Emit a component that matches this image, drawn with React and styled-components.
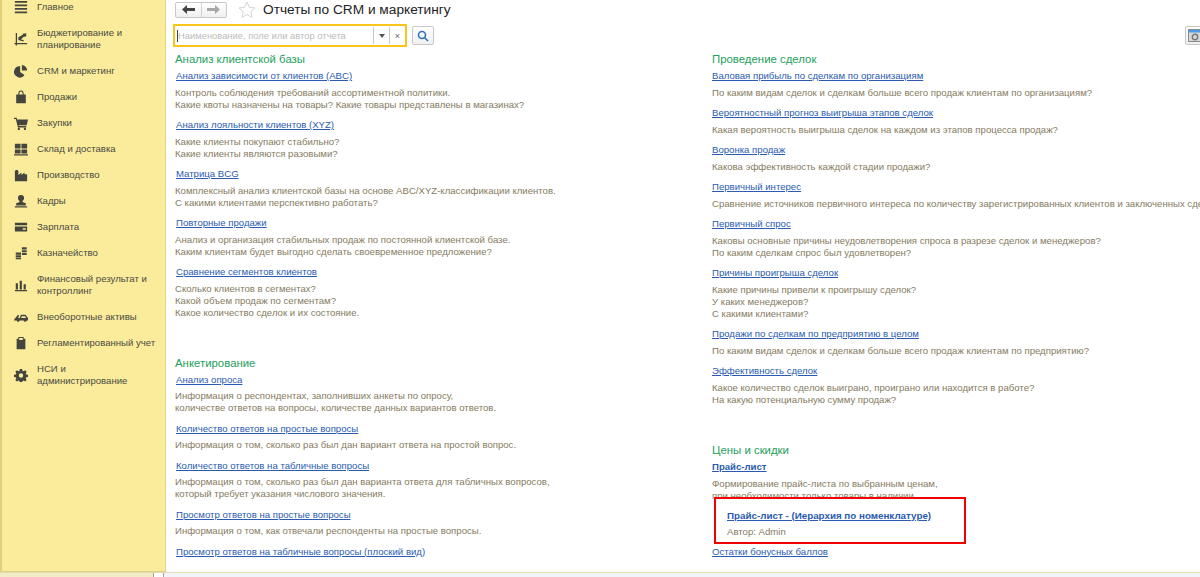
import React from 'react';
import styled, { createGlobalStyle } from 'styled-components';

const GlobalStyle = createGlobalStyle`
  html, body {
    margin: 0;
    padding: 0;
    background: #fff;
    overflow: hidden;
  }
`;

const Page = styled.div`
  width: 1200px;
  height: 577px;
  display: flex;
  flex-direction: column;
  overflow: hidden;
  font-family: 'Liberation Sans', Arial, sans-serif;
`;

const Workspace = styled.div`
  flex: 1;
  min-height: 0;
  display: flex;
`;

const BottomStrip = styled.div`
  height: 4px;
  background: #f1f5f8;
  border-top: 1px solid #e4dcb4;
  display: flex;
`;

const StripCell = styled.div`
  width: ${props => props.$width}px;
  flex-shrink: 0;
  background: ${props => props.$fill};
  border-right: 1px solid #a8a48c;
`;

const Sidebar = styled.nav`
  width: 166px;
  flex-shrink: 0;
  box-sizing: border-box;
  background: #fbec9c;
  border-left: 2px solid #dfd07f;
  border-right: 1px solid #e3d58a;
  border-bottom: 1px solid #dfd07f;
  overflow: hidden;
`;

const NavList = styled.ul`
  list-style: none;
  margin: -6px 0 0;
  padding: 0;
`;

const NavItem = styled.li`
  display: flex;
  align-items: center;
  padding: 7px 0 7px 12px;
  gap: 9px;
  color: #4a4a40;
  font-size: 9.6px;
  line-height: 12px;
`;

const NavIcon = styled.svg`
  width: 14px;
  height: 14px;
  margin: -1px 0;
  flex-shrink: 0;
  fill: #45453f;
`;

const NavLabel = styled.span`
  flex: 1;
  min-width: 0;
  white-space: pre-line;
`;

const Main = styled.main`
  flex: 1;
  min-width: 0;
  display: flex;
  flex-direction: column;
  padding-left: 7px;
  overflow: hidden;
`;

const TitleRow = styled.div`
  display: flex;
  align-items: center;
  height: 17px;
  padding-left: 2px;
  margin-top: 1px;
`;

const NavButtons = styled.div`
  width: 50px;
  height: 14px;
  display: flex;
  border: 1px solid #c8c8c8;
  border-radius: 2px;
  background: linear-gradient(#fff, #f0f0f0);
`;

const NavButton = styled.div`
  flex: 1;
  display: flex;
  align-items: center;
  justify-content: center;
  & + & {
    border-left: 1px solid #d4d4d4;
  }
`;

const Star = styled.svg`
  width: 18px;
  height: 18px;
  margin-left: 11px;
  fill: #fff;
  stroke: #d4d4d4;
  stroke-width: 1;
`;

const Title = styled.h1`
  margin: 0 0 0 7px;
  font-size: 13.7px;
  font-weight: 400;
  line-height: 17px;
  color: #222;
  white-space: nowrap;
`;

const SearchRow = styled.div`
  display: flex;
  align-items: center;
  height: 23px;
  margin-top: 6px;
`;

const SearchField = styled.div`
  width: 234px;
  height: 23px;
  box-sizing: border-box;
  border: 2px solid #fbc61c;
  display: flex;
  align-items: center;
  padding-left: 2px;
`;

const Caret = styled.div`
  width: 1px;
  height: 12px;
  background: #444;
`;

const Placeholder = styled.span`
  flex: 1;
  font-size: 9.4px;
  color: #bcbcbc;
  white-space: nowrap;
  overflow: hidden;
`;

const FieldAction = styled.div`
  width: 15px;
  height: 17px;
  flex-shrink: 0;
  display: flex;
  align-items: center;
  justify-content: center;
  border-left: 1px solid #c8c8c8;
  color: #666;
  font-size: 9px;
`;

const ToolButton = styled.div`
  width: 20px;
  height: 17px;
  margin-left: 5px;
  border: 1px solid #c8c8c8;
  border-radius: 2px;
  background: linear-gradient(#fff, #f0f0f0);
  display: flex;
  align-items: center;
  justify-content: center;
  flex-shrink: 0;
`;

const SettingsButton = styled(ToolButton)`
  margin-left: auto;
  margin-right: -11px;
  width: 22px;
  justify-content: flex-start;
  padding-left: 2px;
`;

const Columns = styled.div`
  display: grid;
  grid-template-columns: 537px 500px;
  margin-top: 5px;
  padding-left: 2px;
`;

const Column = styled.div`
  min-width: 0;
`;

const GroupTitle = styled.h2`
  margin: ${props => props.$gap || 0}px 0 3px;
  font-size: 11.4px;
  line-height: 14px;
  font-weight: 400;
  color: #1ea05c;
`;

const Entry = styled.div`
  margin-bottom: 7.5px;
`;

const ReportLink = styled.a`
  display: block;
  margin-bottom: 4.5px;
  padding-left: ${props => (props.$indent ? 1 : 0)}px;
  font-size: 9.6px;
  line-height: 13px;
  color: #2a5bb0;
  text-decoration: underline;
  font-weight: ${props => (props.$bold ? 700 : 400)};
  white-space: nowrap;
`;

const BoxLink = styled(ReportLink)`
  font-size: 9.8px;
`;

const Description = styled.p`
  margin: 0;
  font-size: 9.6px;
  line-height: 12px;
  color: #867b62;
  white-space: nowrap;
`;

const HighlightBox = styled.div`
  position: relative;
  width: 252px;
  height: 47px;
  box-sizing: border-box;
  margin: -12px 0 0.5px 2px;
  padding: 9.5px 0 0 11px;
  background: #fff;
  border: 2px solid #f00000;
`;

const navItems = [
  { label: 'Главное', icon: <path d="M1 1h14v2H1zM1 5h14v2H1zM1 9h14v2H1zM1 13h14v2H1z" /> },
  {
    label: 'Бюджетирование и планирование',
    icon: <path d="M2 1h1.500v11.500H15V14H3.500v1.500H2V14H.5v-1.500H2zM5 6l5-3v-1l4-.5V5l-3 .5L8 8.500l3 .5v1.500H9.500L5 9z" />,
  },
  { label: 'CRM и маркетинг', icon: <path d="M7 2.500V9l5 3.500A6.500 6.500 0 1 1 7 2.500zM9 1a6.500 6.500 0 0 1 6 6.500H9z" /> },
  { label: 'Продажи', icon: <path fillRule="evenodd" d="M2.500 5H5V3.500a3 3 0 0 1 6 0V5h2.500v10h-11zM6.200 5h3.600V3.500a1.800 1.800 0 0 0-3.600 0z" /> },
  { label: 'Закупки', icon: <path d="M0 2h3l.6 2H16l-1.500 6.500H5.300l.3 1H14v1.500H4.500L2 3.500H0zM5.500 13.500a1.300 1.300 0 1 1 0 2.600 1.300 1.300 0 0 1 0-2.600zM12.500 13.500a1.300 1.300 0 1 1 0 2.600 1.300 1.300 0 0 1 0-2.600z" /> },
  { label: 'Склад и доставка', icon: <path d="M1 2h6.500v5.500H1zM8.500 2H15v5.500H8.500zM1 8.500h6.500V13H1zM8.500 8.500H15V13H8.500zM0 14h16v1.500H0z" /> },
  { label: 'Производство', icon: <path d="M1 15V3l2-1 2 1v5l3.500-3v3l3.500-3v2h3v8z" /> },
  { label: 'Кадры', icon: <path d="M8 1a3.500 3.500 0 0 1 3.500 3.500c0 1.500-.8 3-1.800 3.500v1l3.800 1.500V13h-11v-2.500L6.300 9V8C5.300 7.500 4.500 6 4.500 4.500A3.500 3.500 0 0 1 8 1zM1 14h14v1.500H1z" /> },
  { label: 'Зарплата', icon: <path fillRule="evenodd" d="M1 3h14v3H1zM1 7.500h14V13H1zM10 9.500h3.500v1.500H10z" /> },
  { label: 'Казначейство', icon: <path d="M9 1.500h5.500V4H9zM9 4.800h5.500v2.400H9zM9 8h5.500v2.400H9zM2 7.500h6v2.400H2zM2 10.500h6v2H2zM2 13h6v2H2z" /> },
  { label: 'Финансовый результат и контроллинг', icon: <path d="M2 6h2.500v7H2zM6.500 3h2.500v10H6.500zM11 7h2.500v6H11zM1 13.800h14V15H1z" /> },
  { label: 'Внеоборотные активы', icon: <path fillRule="evenodd" d="M0 11l4.500-5.500 1.500 1L4.500 9h2L8 5.500h5L16 9v3h-1.500a1.800 1.800 0 0 1-3.500 0H6.500a1.800 1.800 0 0 1-3.500 0H0zM9 7l-1 2h6l-1.500-2z" /> },
  { label: 'Регламентированный учет', icon: <path fillRule="evenodd" d="M3 3h2V1h6v2h2v12H3zM6 2.200v2.300h4V2.200z" /> },
  { label: 'НСИ и\nадминистрирование', icon: <path fillRule="evenodd" d="M6.700 1h2.600l.4 2 1.300.6 1.700-1.100 1.800 1.800-1.100 1.700.6 1.300 2 .4v2.600l-2 .4-.6 1.300 1.100 1.700-1.800 1.800-1.700-1.100-1.300.6-.4 2H6.700l-.4-2-1.300-.6-1.700 1.100-1.800-1.800 1.100-1.700-.6-1.300-2-.4V7.700l2-.4.6-1.300-1.100-1.700 1.800-1.800L5 3.600 6.300 3zM8 6a2.500 2.500 0 1 0 0 5 2.500 2.500 0 0 0 0-5z" /> },
];

const leftGroups = [
  {
    title: 'Анализ клиентской базы',
    entries: [
      { link: 'Анализ зависимости от клиентов (ABC)', text: ['Контроль соблюдения требований ассортиментной политики.', 'Какие квоты назначены на товары? Какие товары представлены в магазинах?'] },
      { link: 'Анализ лояльности клиентов (XYZ)', text: ['Какие клиенты покупают стабильно?', 'Какие клиенты являются разовыми?'] },
      { link: 'Матрица BCG', text: ['Комплексный анализ клиентской базы на основе ABC/XYZ-классификации клиентов.', 'С какими клиентами перспективно работать?'] },
      { link: 'Повторные продажи', text: ['Анализ и организация стабильных продаж по постоянной клиентской базе.', 'Каким клиентам будет выгодно сделать своевременное предложение?'] },
      { link: 'Сравнение сегментов клиентов', text: ['Сколько клиентов в сегментах?', 'Какой объем продаж по сегментам?', 'Какое количество сделок и их состояние.'] },
    ],
  },
  {
    title: 'Анкетирование',
    gap: 37,
    entries: [
      { link: 'Анализ опроса', text: ['Информация о респондентах, заполнивших анкеты по опросу,', 'количестве ответов на вопросы, количестве данных вариантов ответов.'] },
      { link: 'Количество ответов на простые вопросы', text: ['Информация о том, сколько раз был дан вариант ответа на простой вопрос.'] },
      { link: 'Количество ответов на табличные вопросы', text: ['Информация о том, сколько раз был дан варианта ответа для табличных вопросов,', 'который требует указания числового значения.'] },
      { link: 'Просмотр ответов на простые вопросы', text: ['Информация о том, как отвечали респонденты на простые вопросы.'] },
      { link: 'Просмотр ответов на табличные вопросы (плоский вид)', text: [] },
    ],
  },
];

const rightEntries = [
  { link: 'Валовая прибыль по сделкам по организациям', text: ['По каким видам сделок и сделкам больше всего продаж клиентам по организациям?'] },
  { link: 'Вероятностный прогноз выигрыша этапов сделок', text: ['Какая вероятность выигрыша сделок на каждом из этапов процесса продаж?'] },
  { link: 'Воронка продаж', text: ['Какова эффективность каждой стадии продажи?'] },
  { link: 'Первичный интерес', text: ['Сравнение источников первичного интереса по количеству зарегистрированных клиентов и заключенных сделок'] },
  { link: 'Первичный спрос', text: ['Каковы основные причины неудовлетворения спроса в разрезе сделок и менеджеров?', 'По каким сделкам спрос был удовлетворен?'] },
  { link: 'Причины проигрыша сделок', text: ['Какие причины привели к проигрышу сделок?', 'У каких менеджеров?', 'С какими клиентами?'] },
  { link: 'Продажи по сделкам по предприятию в целом', text: ['По каким видам сделок и сделкам больше всего продаж клиентам по предприятию?'] },
  { link: 'Эффективность сделок', text: ['Какое количество сделок выиграно, проиграно или находится в работе?', 'На какую потенциальную сумму продаж?'] },
];

const ReportEntry = ({ link, text, bold, indent }) => (
  <Entry>
    <ReportLink $bold={bold} $indent={indent}>{link}</ReportLink>
    {text.map(line => (
      <Description key={line}>{line}</Description>
    ))}
  </Entry>
);

const Arrow = ({ flip, color }) => (
  <svg width="13" height="9" viewBox="0 0 13 9" style={flip ? { transform: 'scaleX(-1)' } : undefined}>
    <path d="M0 4.500L5 0v3h8v3H5v3z" fill={color} />
  </svg>
);

const App = () => (
  <Page>
    <GlobalStyle />
    <Workspace>
      <Sidebar>
        <NavList>
          {navItems.map(item => (
            <NavItem key={item.label}>
              <NavIcon viewBox="0 0 16 16">{item.icon}</NavIcon>
              <NavLabel>{item.label}</NavLabel>
            </NavItem>
          ))}
        </NavList>
      </Sidebar>
      <Main>
        <TitleRow>
          <NavButtons>
            <NavButton><Arrow color="#444" /></NavButton>
            <NavButton><Arrow flip color="#a8a8a8" /></NavButton>
          </NavButtons>
          <Star viewBox="0 0 18 18">
            <path d="M9 1l2.400 5.300 5.600.6-4.200 3.800 1.200 5.600L9 13.500l-5 2.800 1.200-5.600L1 6.900l5.600-.6z" />
          </Star>
          <Title>Отчеты по CRM и маркетингу</Title>
        </TitleRow>
        <SearchRow>
          <SearchField>
            <Caret />
            <Placeholder>Наименование, поле или автор отчета</Placeholder>
            <FieldAction>
              <svg width="6" height="4" viewBox="0 0 6 4"><path d="M0 0h6L3 4z" fill="#555" /></svg>
            </FieldAction>
            <FieldAction>×</FieldAction>
          </SearchField>
          <ToolButton>
            <svg width="12" height="12" viewBox="0 0 12 12" fill="none" stroke="#2c74b8" strokeWidth="1.600">
              <circle cx="5" cy="5" r="3.500" />
              <path d="M7.500 7.500L11 11" />
            </svg>
          </ToolButton>
          <SettingsButton>
            <svg width="14" height="13" viewBox="0 0 14 13">
              <rect x="0.500" y="0.500" width="13" height="12" fill="#d8d8d8" stroke="#8a8a8a" />
              <rect x="1" y="1" width="12" height="2.500" fill="#4a9be8" />
              <circle cx="7" cy="8" r="2.700" fill="none" stroke="#777" strokeWidth="1.400" />
            </svg>
          </SettingsButton>
        </SearchRow>
        <Columns>
          <Column>
            {leftGroups.map(group => (
              <div key={group.title}>
                <GroupTitle $gap={group.gap}>{group.title}</GroupTitle>
                {group.entries.map(entry => (
                  <ReportEntry key={entry.link} indent {...entry} />
                ))}
              </div>
            ))}
          </Column>
          <Column>
            <GroupTitle>Проведение сделок</GroupTitle>
            {rightEntries.map(entry => (
              <ReportEntry key={entry.link} {...entry} />
            ))}
            <GroupTitle $gap={37.5}>Цены и скидки</GroupTitle>
            <ReportEntry
              bold
              link="Прайс-лист"
              text={['Формирование прайс-листа по выбранным ценам,', 'при необходимости только товары в наличии']}
            />
            <HighlightBox>
              <BoxLink $bold>Прайс-лист - (Иерархия по номенклатуре)</BoxLink>
              <Description>Автор: Admin</Description>
            </HighlightBox>
            <ReportEntry link="Остатки бонусных баллов" text={[]} />
          </Column>
        </Columns>
      </Main>
    </Workspace>
    <BottomStrip>
      <StripCell $width={153} $fill="#f4ecc6" />
      <StripCell $width={9} $fill="#fff" />
    </BottomStrip>
  </Page>
);

export default App;
